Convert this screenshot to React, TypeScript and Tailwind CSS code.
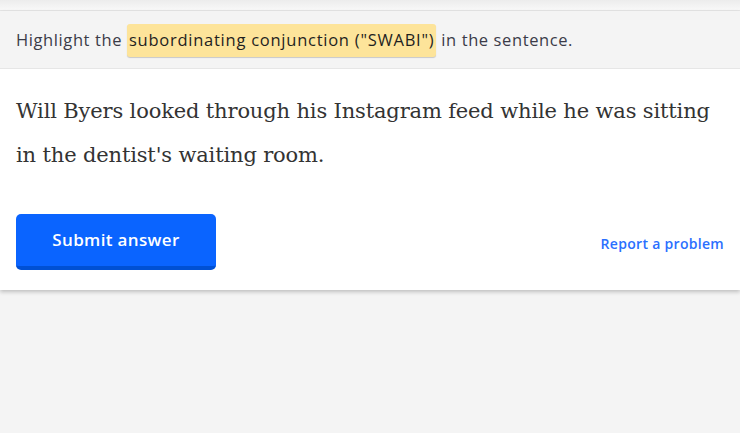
import React from "react";

const App = () => {
  return (
    <div className="min-h-[433px] w-[740px] bg-[#f4f4f4] font-['Open_Sans','Lato',sans-serif]">
      <div className="h-[11px] bg-gradient-to-b from-[#ececec] to-[#f8f8f8] border-b border-[#e6e6e6]" />
      <div className="bg-white shadow-[0_2px_4px_rgba(0,0,0,0.22)]">
        <div className="h-[58px] bg-[#f4f4f4] border-b border-[#e6e6e6] flex items-center px-4 pt-[2px] text-[16.5px] tracking-[0.6px] text-[#3b3b48]">
          <span>Highlight the&nbsp;</span>
          <span className="bg-[#fde49a] rounded-[3px] px-[2px] py-[4px] tracking-[0.75px] text-[#1f1f1f] shadow-[0_1px_1px_rgba(0,0,0,0.18)]">
            subordinating conjunction ("SWABI")
          </span>
          <span>&nbsp;in the sentence.</span>
        </div>
        <div className="px-4 pt-[20px] pb-5">
          <p className="font-['DejaVu_Serif','Liberation_Serif',serif] text-[21px] leading-[44px] text-[#333] tracking-[-0.15px]">
            Will Byers looked through his Instagram feed while he was sitting in the dentist's waiting room.
          </p>
          <div className="mt-[37px] flex items-center justify-between">
            <button className="w-[200px] h-[56px] rounded-[5px] bg-[#0a64ff] border-b-[4px] border-[#0050d4] text-white text-[17px] tracking-[0.35px] font-semibold">
              Submit answer
            </button>
            <a className="text-[14px] tracking-[0.3px] font-semibold text-[#2a6fff] mt-[2px]">Report a problem</a>
          </div>
        </div>
      </div>
    </div>
  );
};

export default App;
